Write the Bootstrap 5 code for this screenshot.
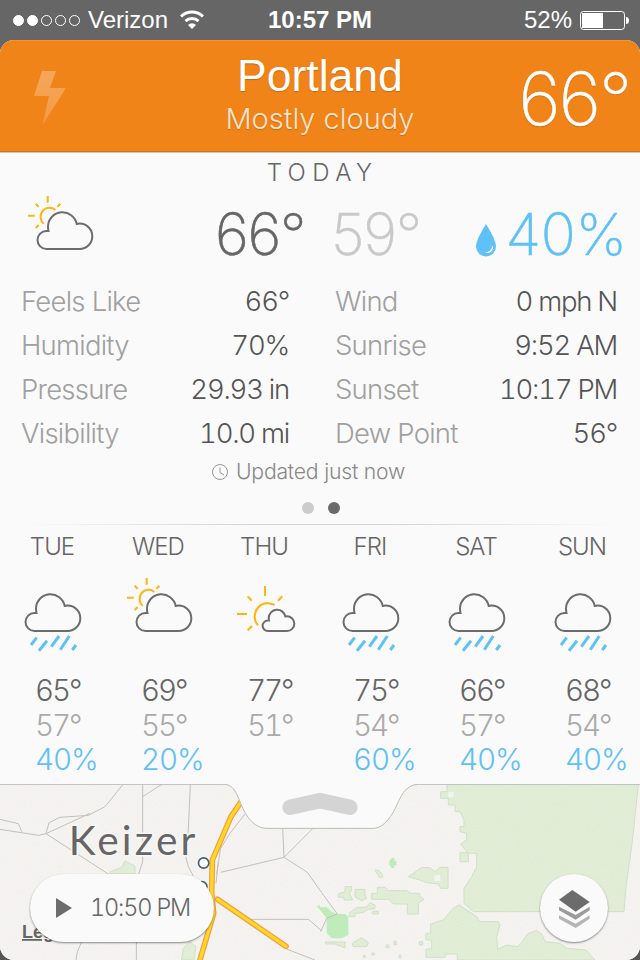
<!DOCTYPE html>
<html lang="en">
<head>
    <meta charset="UTF-8">
    <meta name="viewport" content="width=device-width, initial-scale=1.0">
    <title>Weather</title>
    <!-- Bootstrap CSS -->
    <link href="https://cdn.jsdelivr.net/npm/bootstrap@5.3.1/dist/css/bootstrap.min.css" rel="stylesheet">
    <!-- Custom CSS -->
    <style>
        body {
            width: 640px;
            height: 960px;
            overflow: hidden;
            background: linear-gradient(#666 50%, #555 50%);
            color: #666;
            font-family: Inter, "Liberation Sans", sans-serif;
            font-weight: 300;
        }
        svg { display: block; flex: none; }

        /* Status bar */
        .status-bar {
            height: 40px;
            color: #fff;
            font: 400 24px/42px "Liberation Sans", sans-serif;
        }
        .status-side { width: 214px; }
        .carrier { margin-left: 6px; }

        /* Header */
        .screen { height: 920px; border-radius: 14px; overflow: hidden; background: #fafafa; }
        .city-bar {
            position: relative;
            height: 112px;
            color: #fff;
            background: #f18419;
            border-top: 1px solid #f9952f;
            border-bottom: 1px solid #c6741f;
            box-shadow: 0 1px #c8c8c8;
            text-shadow: 0 1px 1px rgba(120, 60, 0, .35);
        }
        .city-side { width: 150px; }
        .city-name { font: 400 44.5px/49px "Liberation Sans", sans-serif; padding-top: 10px; }
        .city-sky { font-size: 29px; line-height: 38px; color: #fbe3cc; }
        .city-temp { font-size: 73px; font-weight: 200; line-height: 115px; letter-spacing: -.03em; text-align: right; padding-right: 10px; -webkit-text-stroke: .4px; }

        /* Today */
        .today-title { font-size: 24px; line-height: 34px; letter-spacing: 6.4px; padding-left: 5px; height: 40px; padding-top: 4px; }
        .today-row { height: 87px; font-size: 58px; font-weight: 200; line-height: 84px; letter-spacing: -.022em; -webkit-text-stroke: .5px; }
        .today-hi { width: 116px; }
        .today-lo { color: #c9c9c9; }
        .rain-tone { color: #5fc1f6; }
        .today-rain { padding-right: 13px; letter-spacing: -.004em; }
        .drop { margin-right: 8px; }
        .detail-list { font-size: 27.5px; line-height: 44px; letter-spacing: -.028em; color: #a0a0a0; }
        .detail-list span { color: #555; letter-spacing: -.045em; font-variant-numeric: tabular-nums; }
        .detail-left { width: 268px; margin-left: 21px; }
        .detail-right { width: 282px; margin-left: 46px; }
        .updated { height: 33px; padding-right: 23px; font-size: 21.2px; letter-spacing: -.01em; color: #888; }
        .pager { height: 36px; padding: 4px 0 0 2px; gap: 14px; }
        .pager i { width: 12px; height: 12px; border-radius: 50%; background: #ccc; }
        .pager i.on { background: #6b6b6b; }
        .fade-rule { height: 1px; margin: 0 24px; background: linear-gradient(90deg, transparent, #d2d2d2 40%, #d2d2d2 60%, transparent); }

        /* Forecast */
        .forecast { height: 259px; }
        .day { width: 106px; }
        .day-name { font-size: 24px; line-height: 44px; padding-right: 2px; letter-spacing: -.04em; }
        .day-temps { padding-left: 35px; font-size: 29.5px; line-height: 34.5px; letter-spacing: -.035em; white-space: nowrap; font-variant-numeric: tabular-nums; }
        .day-hi, .day-lo { letter-spacing: -.07em; }
        .day-lo { color: #aaa; }

        /* Map */
        .map-area { height: 176px; }
        .map-pill, .map-layers {
            position: absolute;
            top: 90px;
            height: 68px;
            border-radius: 34px;
            background: #fafafa;
            box-shadow: 0 1px 2px rgba(0, 0, 0, .45);
        }
        .map-pill { left: 30px; width: 184px; padding-left: 26px; gap: 18px; font-size: 23.5px; letter-spacing: -.05em; font-variant-numeric: tabular-nums; }
        .map-layers { left: 540px; width: 68px; }
        .map-label { font-family: Lato, sans-serif; font-size: 122px; font-weight: 400; letter-spacing: 9.5px; fill: #666; stroke: #f8f7f5; stroke-width: 9px; paint-order: stroke; }
        .map-legal { font: 700 54px "Liberation Sans", sans-serif; fill: #666; text-decoration: underline; }
    </style>
</head>
<body>
    <!-- Shared icons -->
    <svg width="0" height="0" class="position-absolute">
        <defs>
            <path id="cloud" d="M14.5 35h-2a9 9 0 0 0 0 18H45.600a12.700 12.700 0 0 0 0-25.400q-1.500 0-2.900.3A14.500 14.500 0 0 0 14 30.300q0 2.500.5 4.700z"/>
            <g id="partly" fill="none" stroke-width="2">
                <g stroke="#ffb510">
                    <path d="M9.700 27.700A9 9 0 1 1 21.400 14"/>
                    <path d="M13.700 0v6.800M-6 19.700H.800M1.700 7.700l3 3M26.400 7.700l-3 3M1.700 32l3-3"/>
                </g>
                <use href="#cloud" stroke="#6c6c6c"/>
            </g>
            <g id="sunny" fill="none" stroke-width="2">
                <g stroke="#ffb510">
                    <path d="M46 56.300A13.300 13.300 0 0 1 62.700 36"/>
                    <path d="M53 17v10M25 45h10M35.700 27.300l4 4.400M70.300 27.300l-4.300 4.400M35.700 61.300l4.300-4.300"/>
                </g>
                <use href="#cloud" stroke="#6c6c6c" stroke-width="3.400" transform="translate(48.600 31.300) scale(.579)"/>
            </g>
            <g id="rain" fill="none">
                <use href="#cloud" stroke="#6c6c6c" stroke-width="2"/>
                <path d="M14.700 59.700L9 67M25 62.700l-8 10M37 58l-7.700 10.700M47.300 58l-9 13.700M54 67l-3.700 5" stroke="#5fc1f6" stroke-width="3"/>
            </g>
        </defs>
    </svg>

    <div class="status-bar d-flex align-items-center">
        <div class="status-side d-flex align-items-center">
            <svg width="82" height="40" fill="#fff" stroke="#fff">
                <circle cx="18.500" cy="20.500" r="5"/><circle cx="32.500" cy="20.500" r="5"/>
                <g fill="none"><circle cx="46.500" cy="20.500" r="5"/><circle cx="60.500" cy="20.500" r="5"/><circle cx="74.500" cy="20.500" r="5"/></g>
            </svg>
            <span class="carrier">Verizon</span>
            <svg class="ms-2" width="30" height="40" viewBox="-1 0 30 40" fill="none" stroke="#fff" stroke-width="3">
                <path d="M4 16.500a15.500 15.500 0 0 1 22 0M8.500 21.100a9.500 9.500 0 0 1 13 0"/>
                <path d="M11 24.900a5.800 5.800 0 0 1 8 0L15 29z" fill="#fff" stroke="none"/>
            </svg>
        </div>
        <div class="flex-fill text-center fw-bold">10:57 PM</div>
        <div class="status-side d-flex align-items-center justify-content-end">
            <span>52%</span>
            <svg class="ms-2" width="60" height="40" fill="none" stroke="#fff">
                <rect x=".5" y="11.500" width="44" height="18" rx="3"/>
                <path d="M2 13h21v15H2zM46 17q3 0 3 3.500t-3 3.500z" fill="#fff" stroke="none"/>
            </svg>
        </div>
    </div>

    <main class="screen">
        <header class="city-bar d-flex justify-content-between">
            <svg class="city-side mt-4" height="70">
                <defs><linearGradient id="boltFill" x2="0" y2="1"><stop offset="0" stop-color="#f5a75a"/><stop offset="1" stop-color="#f39a45"/></linearGradient></defs>
                <path d="M42 6h14l-6 17h16L42.500 60l6.500-29H34z" fill="url(#boltFill)"/>
            </svg>
            <div class="text-center">
                <div class="city-name">Portland</div>
                <div class="city-sky">Mostly cloudy</div>
            </div>
            <div class="city-side city-temp">66°</div>
        </header>

        <div class="today-title text-center">TODAY</div>
        <div class="today-row d-flex">
            <svg width="215" height="76"><use href="#partly" transform="translate(34 4)"/></svg>
            <div class="today-hi">66°</div>
            <div class="today-lo">59°</div>
            <div class="today-rain rain-tone ms-auto d-flex">
                <svg class="drop" width="22" height="76">
                    <path d="M11 32Q1 48 1 54.500a10 10 0 0 0 20 0Q21 48 11 32z" fill="#5fc1f6"/>
                    <path d="M17 54q0 5.500-7 6.500 7.500 2 8.300-6z" fill="#fff"/>
                </svg>
                40%
            </div>
        </div>

        <div class="detail-list d-flex">
            <div class="detail-left">
                <div class="d-flex justify-content-between">Feels Like<span>66°</span></div>
                <div class="d-flex justify-content-between">Humidity<span>70%</span></div>
                <div class="d-flex justify-content-between">Pressure<span>29.93 in</span></div>
                <div class="d-flex justify-content-between">Visibility<span>10.0 mi</span></div>
            </div>
            <div class="detail-right">
                <div class="d-flex justify-content-between">Wind<span>0 mph N</span></div>
                <div class="d-flex justify-content-between">Sunrise<span>9:52 AM</span></div>
                <div class="d-flex justify-content-between">Sunset<span>10:17 PM</span></div>
                <div class="d-flex justify-content-between">Dew Point<span>56°</span></div>
            </div>
        </div>
        <div class="updated d-flex align-items-center justify-content-center">
            <svg class="me-2" width="16" height="16" fill="none" stroke="#999"><circle cx="8" cy="8" r="7.500"/><path d="M8 3.500v5l4 2.500"/></svg>
            Updated just now
        </div>
        <div class="pager d-flex align-items-center justify-content-center"><i></i><i class="on"></i></div>
        <div class="fade-rule"></div>

        <div class="forecast d-flex" id="forecast"></div>

        <div class="map-area position-relative">
            <svg width="640" height="176" viewBox="0 42 1920 528">
                <defs>
                    <filter id="grain" x="0" y="0" width="100%" height="100%">
                        <feTurbulence type="fractalNoise" baseFrequency=".35" numOctaves="2" seed="4"/>
                        <feColorMatrix values="1 0 0 0 .15  0 1 0 0 .15  0 0 1 0 .15  0 0 0 0 .08"/>
                    </filter>
                </defs>
                <path d="M0 42h1920v528H0z" fill="#f7f5f2"/>
                <!-- Parks -->
                <g fill="#e2efd6" stroke="#cfe1c4" stroke-width="3">
                    <path transform="translate(960)" d="M380 42H955L942 170 935 230 918 350 912 425H460L432 400V355L455 320 470 290V250H445L422 222 440 210V190L420 185V170H432V150L420 125H405V105H385V85H362V65H382z"/>
                    <path transform="translate(960)" d="M420 248H445V275H420zM265 320L305 293H330L345 305 360 292H384V355H362L355 342 320 338 300 330z"/>
                    <path transform="translate(960)" d="M155 370H172V352H195L205 362H262L270 370H298L300 380 312 388 295 400V432H262V402H220L205 388H155zM55 372L75 365V350H95V362L88 370 98 390H72V382H55zM105 358H135V375L140 385 125 392 105 380z"/>
                    <path transform="translate(960)" d="M88 430L110 412H140L150 398 165 405V415L140 420 130 428 105 430V440H88zM165 300H175L188 315V322H178zM15 516H75V534L45 522H18zM97 520L125 503 145 518 140 530H100zM157 424H175V432H157z"/>
                    <path transform="translate(960)" d="M332 462L370 450 400 415 418 405 440 420 470 440 480 455H535L540 465 530 500 533 538 560 525 595 530 625 490 650 482 665 492 675 515 720 520 740 535 798 540 825 570H412V552H375V562H318V537H335V510H318V490H332z"/>
                    <path transform="translate(960)" d="M198 525h9v8h-9zM222 514h7v10h-7zM298 515h10v10h-10zM130 556h6v6h-6zM155 549h8v6h-8zM237 555h6v8h-6z"/>
                    <path d="M330 305L365 292 375 273 405 288V312H330zM545 570L550 535 570 515 588 530 582 570z"/>
                </g>
                <path d="M1345 66h16v15h-16zM1303 315h18v18h-18z" fill="#f7f5f2"/>
                <g fill="#bdeeb7">
                    <path d="M960 412H980L995 425 1010 432H1035L1045 440V495L1025 505H995L980 490V445L960 420z"/>
                    <path d="M1168 272l8-8h7v8h6v14h-6v8h-8l-7-8zM950 410l10-5v15z"/>
                </g>
                <rect y="42" width="1920" height="528" filter="url(#grain)"/>
                <!-- Minor roads -->
                <g fill="none" stroke="#c0c0bd" stroke-width="3">
                    <path d="M0 148L55 161 66 186M0 178L115 196 138 191 147 158 180 142 265 136 315 110 370 42M138 191L270 130M138 191L325 312"/>
                    <path d="M428 42V275L416 312M428 80L487 42M571 42L565 180 557 260 565 290 580 318M650 312L662 235 690 190 735 132M662 307L852 262 848 172M852 262L942 172M852 262L922 307 965 368 1012 432 980 445 962 485"/>
                    <path d="M648 340L655 275M750 448H925L965 482M862 538L945 570M409 512V570M245 516L232 545 228 570"/>
                </g>
                <!-- Highways -->
                <g fill="none" stroke-linecap="round" stroke-linejoin="round">
                    <g stroke="#f2994f" stroke-width="17">
                        <path d="M735 78L693 140 637 270 635 370 641 430 597 580"/>
                        <path d="M653 388L858 529"/>
                    </g>
                    <g stroke="#ffd91f" stroke-width="10">
                        <path d="M735 78L693 140 637 270 635 370 641 430 597 580"/>
                        <path d="M653 388L858 529"/>
                    </g>
                </g>
                <g fill="#fff" stroke="#4a6078" stroke-width="5"><circle cx="611" cy="279" r="15.500"/><circle cx="606" cy="350" r="15"/></g>
                <text class="map-label" x="206" y="255">Keizer</text>
                <text class="map-legal" x="66" y="504">Legal</text>
                <!-- Pull tab -->
                <path d="M0 36H1920V43H1255C1215 43 1200 85 1190 106 1165 160 1140 175 1118 175H802C765 175 740 145 722 100 710 70 700 43 672 43H0z" fill="#fafafa" stroke="#bbb" stroke-width="3"/>
                <path d="M870 112L960 92 1050 112" fill="none" stroke="#d4d4d4" stroke-width="46" stroke-linecap="round"/>
            </svg>

            <div class="map-pill d-flex align-items-center">
                <svg width="16" height="20"><path d="M0 0l16 10L0 20z" fill="#6c6c6c"/></svg>
                10:50 PM
            </div>
            <div class="map-layers">
                <svg width="68" height="68" viewBox="660 312 204 204">
                    <path d="M717 436v10l50 28 42-28v-10l-42 25z" fill="#b5b5b5"/>
                    <path d="M717 410v11l50 28 42-28v-11l-42 25z" fill="#9b9b9b"/>
                    <path d="M757 360l52 36-42 29-50-36z" fill="#6c6c6c"/>
                </svg>
            </div>
        </div>
    </main>

    <script src="https://cdn.jsdelivr.net/npm/bootstrap@5.3.1/dist/js/bootstrap.bundle.min.js"></script>
    <script>
        // icon x is the offset inside the day column
        const days = [
            { name: 'TUE', icon: 'rain', x: 22, hi: 65, lo: 57, rain: '40%' },
            { name: 'WED', icon: 'partly', x: 27, hi: 69, lo: 55, rain: '20%' },
            { name: 'THU', icon: 'sunny', x: 0, hi: 77, lo: 51, rain: '' },
            { name: 'FRI', icon: 'rain', x: 22, hi: 75, lo: 54, rain: '60%' },
            { name: 'SAT', icon: 'rain', x: 22, hi: 66, lo: 57, rain: '40%' },
            { name: 'SUN', icon: 'rain', x: 22, hi: 68, lo: 54, rain: '40%' }
        ];

        document.getElementById('forecast').innerHTML = days.map(day => `
            <div class="day">
                <div class="day-name text-center">${day.name}</div>
                <svg width="106" height="104" viewBox="0 569 106 104">
                    <use href="#${day.icon}" transform="translate(${day.x} ${day.icon === 'sunny' ? 569 : 578})"/>
                </svg>
                <div class="day-temps">
                    <div class="day-hi">${day.hi}°</div>
                    <div class="day-lo">${day.lo}°</div>
                    <div class="rain-tone">${day.rain}</div>
                </div>
            </div>
        `).join('');
    </script>
</body>
</html>
